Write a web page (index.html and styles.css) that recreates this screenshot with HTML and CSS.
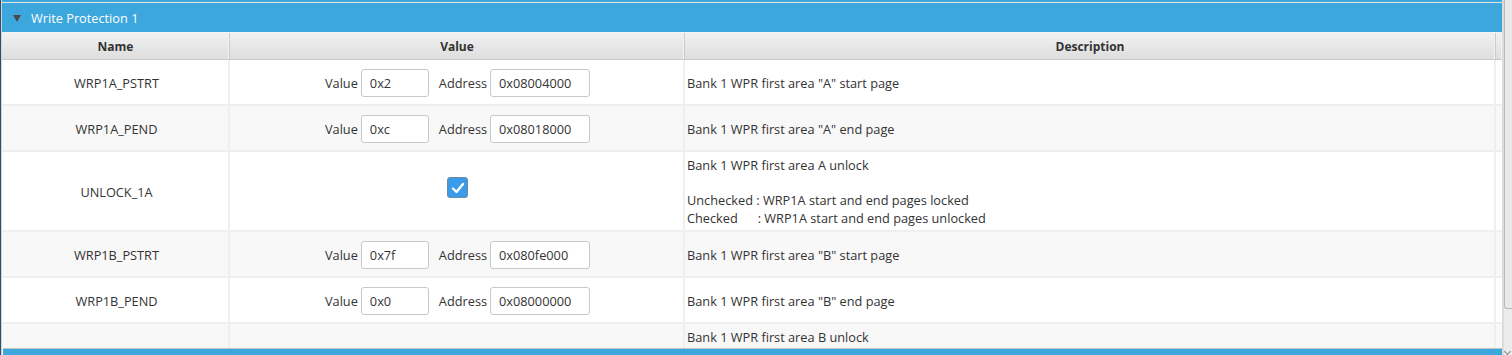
FILE: index.html
```html
<!DOCTYPE html>
<html>
<head>
<meta charset="utf-8">
<link rel="stylesheet" href="styles.css">
</head>
<body>
<div class="page">
  <div class="edge"></div>
  <div class="main">
    <div class="top-strip"></div>
    <div class="top-gap"></div>
    <div class="section-head">
      <span class="tri"></span>
      <span class="section-title">Write Protection 1</span>
    </div>
    <div class="head-gap"></div>
    <div class="table">
      <div class="thead">
        <div class="th">Name</div>
        <div class="th">Value</div>
        <div class="th">Description</div>
        <div class="th th-fill"></div>
      </div>
      <div class="row">
        <div class="td name">WRP1A_PSTRT</div>
        <div class="td val"><span class="lbl">Value</span><span class="inp w-s">0x2</span><span class="lbl lbl-addr">Address</span><span class="inp w-l">0x08004000</span></div>
        <div class="td desc">Bank 1 WPR first area "A" start page</div>
        <div class="td fill"></div>
      </div>
      <div class="row alt">
        <div class="td name">WRP1A_PEND</div>
        <div class="td val"><span class="lbl">Value</span><span class="inp w-s">0xc</span><span class="lbl lbl-addr">Address</span><span class="inp w-l">0x08018000</span></div>
        <div class="td desc">Bank 1 WPR first area "A" end page</div>
        <div class="td fill"></div>
      </div>
      <div class="row tall">
        <div class="td name">UNLOCK_1A</div>
        <div class="td val"><span class="chk"><svg width="14" height="12" viewBox="0 0 14 12"><path d="M2 6.5 L5.5 10 L12 2" fill="none" stroke="#fff" stroke-width="2.4" stroke-linecap="round" stroke-linejoin="round"/></svg></span></div>
        <div class="td desc multi">Bank 1 WPR first area A unlock<br><br>Unchecked : WRP1A start and end pages locked<br>Checked&nbsp;&nbsp;&nbsp;&nbsp;&nbsp; : WRP1A start and end pages unlocked</div>
        <div class="td fill"></div>
      </div>
      <div class="row alt">
        <div class="td name">WRP1B_PSTRT</div>
        <div class="td val"><span class="lbl">Value</span><span class="inp w-s">0x7f</span><span class="lbl lbl-addr">Address</span><span class="inp w-l">0x080fe000</span></div>
        <div class="td desc">Bank 1 WPR first area "B" start page</div>
        <div class="td fill"></div>
      </div>
      <div class="row">
        <div class="td name">WRP1B_PEND</div>
        <div class="td val"><span class="lbl">Value</span><span class="inp w-s">0x0</span><span class="lbl lbl-addr">Address</span><span class="inp w-l">0x08000000</span></div>
        <div class="td desc">Bank 1 WPR first area "B" end page</div>
        <div class="td fill"></div>
      </div>
      <div class="row alt tall">
        <div class="td name"></div>
        <div class="td val"></div>
        <div class="td desc multi">Bank 1 WPR first area B unlock</div>
        <div class="td fill"></div>
      </div>
    </div>
    <div class="bottom-bar"></div>
  </div>
  <div class="scrollbar">
    <div class="thumb"></div>
    <div class="track"><span class="arrow"></span></div>
  </div>
</div>
</body>
</html>
```
FILE: styles.css
```css
* { box-sizing: border-box; }
html, body { margin: 0; padding: 0; background: #fff; }
body {
  font-family: "Open Sans", "Noto Sans", sans-serif;
  font-size: 12.75px;
  color: #333;
}
.page {
  width: 1512px;
  height: 355px;
  display: flex;
  overflow: hidden;
}
.edge {
  width: 1px;
  background: #2b4f72;
  flex: none;
}
.main {
  width: 1501px;
  display: flex;
  flex-direction: column;
  overflow: hidden;
  position: relative;
  border-left: 1px solid #d4d4d4;
}
.top-strip { height: 2px; background: #3ba7dc; flex: none; }
.top-gap { height: 1px; background: #e4e4e4; flex: none; }
.section-head {
  height: 29px;
  flex: none;
  background: #3ca7dc;
  display: flex;
  align-items: center;
  padding-left: 11px;
  gap: 10px;
}
.tri {
  width: 0;
  height: 0;
  border-left: 4px solid transparent;
  border-right: 4px solid transparent;
  border-top: 7px solid #4a4a4a;
  margin-top: 1px;
}
.section-title {
  color: #fff;
  font-size: 12.75px;
}
.head-gap { height: 1px; background: #f4f4f4; flex: none; }
.table {
  flex: 1;
  overflow: hidden;
  display: flex;
  flex-direction: column;
}
.thead, .row {
  display: grid;
  grid-template-columns: 228px 455px 811px 6px;
  flex: none;
}
.thead {
  height: 27px;
  background: linear-gradient(#f1f1f1, #dedede);
  border-bottom: 1px solid #c9c9c9;
  font-size: 12px;
}
.th {
  display: flex;
  align-items: center;
  justify-content: center;
  font-weight: bold;
  color: #333;
  border-right: 1px solid #c9c9c9;
  box-shadow: inset -1px 0 0 #f4f4f4;
}
.th-fill { border-right: none; }
.row {
  height: 46px;
  background: #fff;
  border-bottom: 2px solid #efefef;
}
.row.alt { background: #f8f8f8; }
.row.tall { height: 80px; }
.td {
  display: flex;
  align-items: center;
  border-right: 2px solid #efefef;
  min-width: 0;
  padding-top: 1px;
}
.td.fill { border-right: none; }
.name { justify-content: center; padding-left: 3px; }
.val { justify-content: center; padding-left: 2px; }
.desc {
  padding-left: 2px;
  white-space: nowrap;
}
.desc.multi {
  display: block;
  padding-top: 5px;
  line-height: 17.6px;
}
.lbl { margin-right: 3px; }
.lbl-addr { margin-left: 10px; }
.inp {
  height: 28px;
  border: 1px solid #c8c8c8;
  border-radius: 3px;
  background: #fff;
  display: flex;
  align-items: center;
  padding-left: 8px;
}
.w-s { width: 68px; }
.w-l { width: 100px; }
.chk {
  width: 21px;
  height: 21px;
  border: 1px solid #6f8aa0;
  border-radius: 3px;
  background: #3a9bea;
  display: flex;
  align-items: center;
  justify-content: center;
  margin-bottom: 8px;
}
.bottom-bar {
  position: absolute;
  left: 1px;
  right: 0;
  bottom: 0;
  height: 7px;
  border-top: 1px solid #c4c4c4;
  background: #3ba7dc;
}
.scrollbar {
  width: 10px;
  flex: none;
  display: flex;
  flex-direction: column;
  background: #ececec;
  border-left: 2px solid #dcdcdc;
}
.thumb {
  height: 309px;
  background: #e9e9e9;
  border: 1px solid #b9b9b9;
  border-top: none;
  border-right: none;
  border-radius: 0 0 0 3px;
}
.track { flex: 1; position: relative; }
.arrow {
  position: absolute;
  left: 1px;
  bottom: 1px;
  width: 5px;
  height: 5px;
  border-right: 1px solid #8a8a8a;
  border-bottom: 1px solid #8a8a8a;
  transform: rotate(45deg);
}
```
